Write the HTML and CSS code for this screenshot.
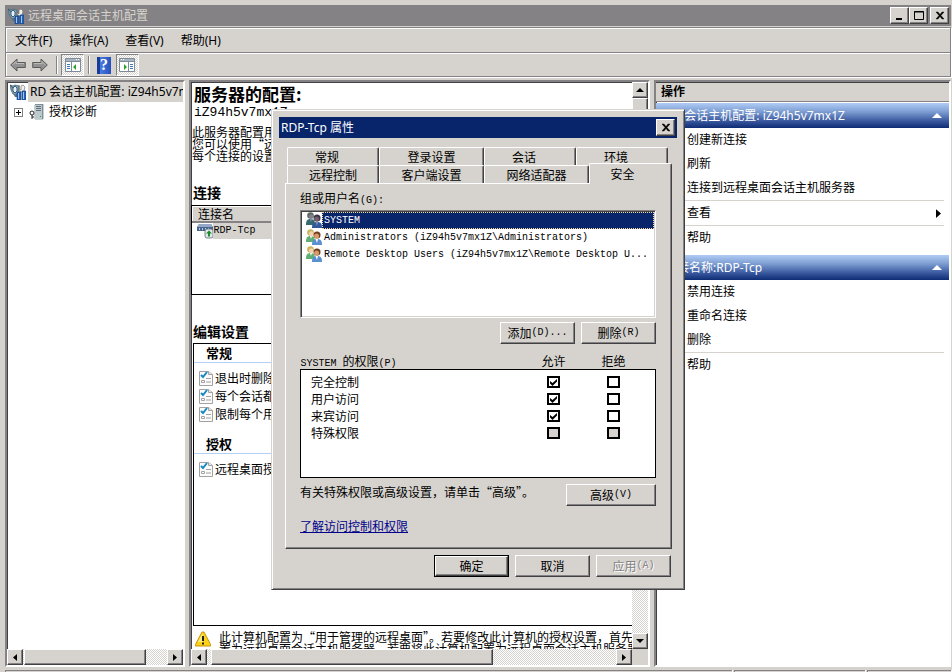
FILE: index.html
```html
<!DOCTYPE html>
<html lang="zh-CN">

<head>
    <meta charset="UTF-8">
    <meta name="viewport" content="width=device-width, initial-scale=1.0">
    <title>远程桌面会话主机配置</title>
    <link rel="stylesheet" href="styles.css">
</head>

<body>
    <!-- shared icons -->
    <svg class="sprite" aria-hidden="true">
        <symbol id="i-tools" viewBox="0 0 16 16">
            <path d="M0 1l3 1 2-1 4 1v6l-3 3-3-1-2-4z" fill="#7f9cb0" stroke="#4a6a80" stroke-width=".8" />
            <path d="M0 1l3 3M3 4l2-2 2 2v3L5 9 3 7z" fill="#e6f3fa" stroke="#3e5f78" />
            <path d="M4 11l3-1 2 3H5z" fill="#566f80" />
            <path d="M9 1v4l2 1V2l2-1 2 2-1 4-3 1-2-2z" fill="#f0f0f0" stroke="#777" stroke-width=".7" />
            <path d="M7 8h4v8H7zM12 7h4v9h-4z" fill="#2460b4" stroke="#17427f" stroke-width=".6" />
            <path d="M8.500 9v6M13.500 8v7" stroke="#9cc6f3" />
        </symbol>
        <symbol id="i-server" viewBox="0 0 16 16">
            <path d="M6 1l1-1h7v15H6z" fill="#8e9ba3" stroke="#69787f" stroke-width=".7" />
            <path d="M6 1h7v14H6z" fill="#bccacf" />
            <path d="M7 2h5v1H7zM7 4h5v1H7zM7 6h5v1H7z" fill="#5f7078" />
            <path d="M11 12h1v1h-1z" fill="#20b020" />
            <circle cx="3" cy="9" r="2" fill="#fff" stroke="#222" />
            <path d="M3 11v4M3 13h2" stroke="#222" />
        </symbol>
        <symbol id="i-rdp" viewBox="0 0 16 16">
            <path d="M2 1h12l2 3v4H0V4z" fill="#49668f" />
            <path d="M2 1h12l2 3H0z" fill="#93a9c6" />
            <path d="M2 6h1M5 6h1M8 6h1M11 6h1" stroke="#dceaff" stroke-width="1.4" />
            <rect x="8" y="6" width="8" height="9" rx="2" fill="#e0e8e8" stroke="#5c6878" stroke-width=".8" />
            <path d="M12 7.500l3 3h-2v3h-2v-3H9z" fill="#1e8a2c" />
        </symbol>
        <symbol id="i-check" viewBox="0 0 14 16">
            <path d="M.5 1.500h9l4 3v11H.5z" fill="#fbfbfb" stroke="#a2a2a2" />
            <path d="M9.500 1.500v3h4" fill="#e5e5e5" stroke="#a2a2a2" />
            <path d="M2.500 10.500h3v2h-3z" fill="#fff" stroke="#a2a2a2" />
            <path d="M7 8.500h5M7 12h5" stroke="#a2a2a2" />
            <path d="M2 5l2 2 4-5" fill="none" stroke="#1688c4" stroke-width="2" />
        </symbol>
        <symbol id="i-users" viewBox="0 0 16 16">
            <circle cx="4.500" cy="3.500" r="3.300" fill="#c8b25a" />
            <circle cx="5.200" cy="4.500" r="2.200" fill="#f6d3b0" />
            <path d="M0 13c0-4 1-6 4.500-6S9 9 9 13z" fill="#5fae74" />
            <path d="M4 7l1 3 1-3z" fill="#fff" />
            <circle cx="11" cy="6" r="3.500" fill="#6b3d1e" />
            <circle cx="10.600" cy="7" r="2.500" fill="#d99a68" />
            <path d="M6 16c0-4 1-6 5-6s5 2 5 6z" fill="#5a8fd0" />
            <path d="M9.500 10l1.500 4 1-4z" fill="#fff" />
        </symbol>
        <symbol id="i-users-sel" viewBox="0 0 16 16">
            <circle cx="4.500" cy="3.500" r="3.300" fill="#5c6a63" />
            <circle cx="5.200" cy="4.500" r="2.200" fill="#7f7f8e" />
            <path d="M0 13c0-4 1-6 4.500-6S9 9 9 13z" fill="#34696f" />
            <path d="M4 7l1 3 1-3z" fill="#8391b5" />
            <circle cx="11" cy="6" r="3.500" fill="#393144" />
            <circle cx="10.600" cy="7" r="2.500" fill="#705f69" />
            <path d="M6 16c0-4 1-6 5-6s5 2 5 6z" fill="#31599d" />
            <path d="M9.500 10l1.500 4 1-4z" fill="#8391b5" />
        </symbol>
        <symbol id="i-arrow" viewBox="0 0 16 14">
            <path d="M.7 7L7 1v3.500h8.300v5H7V13z" fill="#929292" stroke="#5a5a5a" />
            <path d="M2.500 7L6 3.500v2h8" fill="none" stroke="#bbb" />
        </symbol>
        <symbol id="i-pane" viewBox="0 0 16 14">
            <path d="M.5.5h15v13H.5z" fill="#fff" stroke="#7e8b99" />
            <path d="M1 1h14v2H1z" fill="#a8b4c0" />
            <path d="M1 3.500h14M6.500 4v9" stroke="#7e8b99" />
            <path d="M11 1.500h1M13 1.500h1" stroke="#fff" />
            <path d="M2 6.500h3M2 8.500h3M2 10.500h3" stroke="#3a78b8" />
            <path d="M11 6v6L8 9z" fill="#2ca02c" />
        </symbol>
        <symbol id="i-x" viewBox="0 0 10 9">
            <path d="M1 1h2l2 2.500L7 1h2L6 4.500 9 8H7L5 5.500 3 8H1l3-3.500z" fill="#000" stroke="#000" stroke-width=".4" />
        </symbol>
        <symbol id="i-left" viewBox="0 0 4 7">
            <path d="M4 0v7L0 3.500z" />
        </symbol>
        <symbol id="i-up" viewBox="0 0 8 4">
            <path d="M0 4h8L4 0z" />
        </symbol>
    </svg>

    <header class="titlebar">
        <svg class="icon"><use href="#i-tools" /></svg>
        <span class="caption">远程桌面会话主机配置</span>
        <button class="btn cap" aria-label="最小化"><svg width="10" height="9"><path d="M1 7h6v2H1z" /></svg></button>
        <button class="btn cap" aria-label="最大化"><svg width="10" height="9"><path d="M.5.5h9v8h-9zM0 1h10" fill="none" stroke="#000" /></svg></button>
        <button class="btn cap close" aria-label="关闭"><svg width="10" height="9"><use href="#i-x" /></svg></button>
    </header>

    <div class="bars">
        <nav class="menubar">
            <button>文件(F)</button>
            <button>操作(A)</button>
            <button>查看(V)</button>
            <button>帮助(H)</button>
        </nav>
        <div class="toolbar">
            <button class="tool" aria-label="后退"><svg width="16" height="14"><use href="#i-arrow" /></svg></button>
            <button class="tool flip" aria-label="前进"><svg width="16" height="14"><use href="#i-arrow" /></svg></button>
            <span class="sep"></span>
            <button class="tool pressed" aria-label="显示控制台树"><svg width="16" height="14"><use href="#i-pane" /></svg></button>
            <span class="sep"></span>
            <button class="tool help" aria-label="帮助">?</button>
            <button class="tool pressed flip" aria-label="显示操作窗格"><svg width="16" height="14"><use href="#i-pane" /></svg></button>
        </div>
    </div>

    <main class="panes">
        <section class="pane tree">
            <ul class="nodes">
                <li class="node root">
                    <svg class="icon"><use href="#i-tools" /></svg>
                    <span class="node-name selected">RD 会话主机配置: iZ94h5v7mx1Z</span>
                </li>
                <li class="node child">
                    <button class="plus" aria-label="展开"></button>
                    <svg class="icon"><use href="#i-server" /></svg>
                    <span class="node-name">授权诊断</span>
                </li>
            </ul>
            <div class="hscroll">
                <button class="btn arrow" aria-label="向左"><svg width="4" height="7"><use href="#i-left" /></svg></button>
                <div class="track"><div class="btn thumb tree-thumb"></div></div>
                <button class="btn arrow" aria-label="向右"><svg class="flip" width="4" height="7"><use href="#i-left" /></svg></button>
            </div>
        </section>

        <section class="pane result">
            <div class="content">
                <h1>服务器的配置:</h1>
                <div class="server-name">iZ94h5v7mx1Z</div>
                <p class="intro">此服务器配置用于远程桌面会话主机的连接。<br>您可以使用“远程桌面会话主机配置”来修改<br>每个连接的设置，或修改整个服务器的设置。</p>
                <h2>连接</h2>
                <div class="connections">
                    <table>
                        <thead>
                            <tr><th>连接名</th></tr>
                        </thead>
                        <tbody>
                            <tr><td><svg class="icon"><use href="#i-rdp" /></svg><span class="mono selected">RDP-Tcp</span></td></tr>
                        </tbody>
                    </table>
                </div>
                <h2>编辑设置</h2>
                <div class="settings">
                    <h3>常规</h3>
                    <ul>
                        <li><svg class="doc"><use href="#i-check" /></svg>退出时删除临时文件夹</li>
                        <li><svg class="doc"><use href="#i-check" /></svg>每个会话都使用临时文件夹</li>
                        <li><svg class="doc"><use href="#i-check" /></svg>限制每个用户只能进行一个会话</li>
                    </ul>
                    <h3>授权</h3>
                    <ul>
                        <li><svg class="doc"><use href="#i-check" /></svg>远程桌面授权模式</li>
                    </ul>
                </div>
                <div class="notice">
                    <svg class="icon" viewBox="0 0 16 16">
                        <path d="M7 1h2l6.500 12.500V15H.5v-1.500z" fill="#fbd11c" stroke="#c99400" />
                        <path d="M7.500 2.500L3 11h5z" fill="#fdec84" />
                        <path d="M7 5h2v5H7zM7 11.500h2v2H7z" fill="#222" />
                    </svg>
                    <p>此计算机配置为“用于管理的远程桌面”。若要修改此计算机的授权设置，首先<br>置为远程桌面会话主机服务器，若要将此计算机配置为远程桌面会话主机服务器</p>
                </div>
            </div>
            <div class="vscroll">
                <button class="btn arrow" aria-label="向上"><svg width="8" height="4"><use href="#i-up" /></svg></button>
                <div class="track"><div class="btn thumb result-vthumb"></div></div>
                <button class="btn arrow" aria-label="向下"><svg class="down" width="8" height="4"><use href="#i-up" /></svg></button>
            </div>
            <div class="hscroll">
                <button class="btn arrow" aria-label="向左"><svg width="4" height="7"><use href="#i-left" /></svg></button>
                <div class="track"><div class="btn thumb result-thumb"></div></div>
                <button class="btn arrow" aria-label="向右"><svg class="flip" width="4" height="7"><use href="#i-left" /></svg></button>
            </div>
        </section>

        <aside class="pane actions">
            <h2 class="actions-title">操作</h2>
            <div class="group">
                <h3 class="group-title">RD 会话主机配置: iZ94h5v7mx1Z<svg width="10" height="5" viewBox="0 0 8 4"><use href="#i-up" /></svg></h3>
                <button>创建新连接</button>
                <button>刷新</button>
                <button>连接到远程桌面会话主机服务器</button>
                <hr>
                <button>查看<svg class="flip" width="5" height="9"><use href="#i-left" /></svg></button>
                <hr>
                <button>帮助</button>
            </div>
            <div class="group">
                <h3 class="group-title">连接名称:RDP-Tcp<svg width="10" height="5" viewBox="0 0 8 4"><use href="#i-up" /></svg></h3>
                <button>禁用连接</button>
                <button>重命名连接</button>
                <button>删除</button>
                <hr>
                <button>帮助</button>
            </div>
        </aside>
    </main>

    <footer class="statusbar">
        <span></span>
        <span></span>
        <span></span>
    </footer>

    <div class="dialog" role="dialog" aria-labelledby="dialog-title">
        <div class="dialog-title">
            <span id="dialog-title">RDP-Tcp 属性</span>
            <button class="btn cap" aria-label="关闭"><svg width="10" height="9"><use href="#i-x" /></svg></button>
        </div>
        <div class="dialog-body">
            <div class="tabs" role="tablist">
                <div class="tab-row back">
                    <button class="tab w1" role="tab">常规</button>
                    <button class="tab w2" role="tab">登录设置</button>
                    <button class="tab w1" role="tab">会话</button>
                    <button class="tab w1" role="tab">环境</button>
                </div>
                <div class="tab-row">
                    <button class="tab w1" role="tab">远程控制</button>
                    <button class="tab w2" role="tab">客户端设置</button>
                    <button class="tab w2" role="tab">网络适配器</button>
                    <button class="tab active" role="tab" aria-selected="true">安全</button>
                </div>
            </div>
            <div class="sheet" role="tabpanel">
                <div class="field-label" id="users-label">组或用户名<span class="mono">(G):</span></div>
                <ul class="users" role="listbox" aria-labelledby="users-label">
                    <li role="option" aria-selected="true"><svg class="icon"><use href="#i-users-sel" /></svg><span class="mono user on">SYSTEM</span></li>
                    <li role="option"><svg class="icon"><use href="#i-users" /></svg><span class="mono user">Administrators (iZ94h5v7mx1Z\Administrators)</span></li>
                    <li role="option"><svg class="icon"><use href="#i-users" /></svg><span class="mono user">Remote Desktop Users (iZ94h5v7mx1Z\Remote Desktop U...</span></li>
                </ul>
                <div class="row-end">
                    <button class="btn push">添加<span class="mono">(D)...</span></button>
                    <button class="btn push">删除<span class="mono">(R)</span></button>
                </div>
                <table class="perms">
                    <thead>
                        <tr>
                            <th><span class="mono">SYSTEM </span>的权限<span class="mono">(P)</span></th>
                            <th class="tick">允许</th>
                            <th class="tick deny">拒绝</th>
                        </tr>
                    </thead>
                    <tbody>
                        <tr>
                            <td>完全控制</td>
                            <td class="tick"><input type="checkbox" aria-label="允许完全控制" checked></td>
                            <td class="tick deny"><input type="checkbox" aria-label="拒绝完全控制"></td>
                        </tr>
                        <tr>
                            <td>用户访问</td>
                            <td class="tick"><input type="checkbox" aria-label="允许用户访问" checked></td>
                            <td class="tick deny"><input type="checkbox" aria-label="拒绝用户访问"></td>
                        </tr>
                        <tr>
                            <td>来宾访问</td>
                            <td class="tick"><input type="checkbox" aria-label="允许来宾访问" checked></td>
                            <td class="tick deny"><input type="checkbox" aria-label="拒绝来宾访问"></td>
                        </tr>
                        <tr>
                            <td>特殊权限</td>
                            <td class="tick"><input type="checkbox" aria-label="允许特殊权限" disabled></td>
                            <td class="tick deny"><input type="checkbox" aria-label="拒绝特殊权限" disabled></td>
                        </tr>
                    </tbody>
                </table>
                <div class="advanced">
                    <span>有关特殊权限或高级设置，请单击“高级”。</span>
                    <button class="btn push wide">高级<span class="mono">(V)</span></button>
                </div>
                <a class="learn" href="#">了解访问控制和权限</a>
            </div>
            <div class="dialog-buttons">
                <button class="btn push default">确定</button>
                <button class="btn push">取消</button>
                <button class="btn push" disabled>应用<span class="mono">(A)</span></button>
            </div>
        </div>
    </div>
</body>

</html>
```
FILE: styles.css
```css
:root {
    --face: #d6d3ce;
    --shadow: #848284;
    --dark: #424142;
    --navy: #08246b;
    --song: "Noto Sans CJK SC", sans-serif;
    --ui: "Noto Sans", "Noto Sans CJK SC", sans-serif;
}

* {
    box-sizing: border-box;
}

body {
    margin: 0;
    padding: 5px 1px 0 5px;
    height: 100vh;
    display: flex;
    flex-direction: column;
    overflow: hidden;
    position: relative;
    background-color: var(--face);
    color: black;
    font-family: var(--ui);
    font-size: 12px;
    line-height: 16px;
}

h1,
h2,
h3,
p,
ul {
    margin: 0;
    padding: 0;
}

ul {
    list-style: none;
}

button {
    font: inherit;
    color: inherit;
    padding: 0;
    margin: 0;
    border: none;
    background: none;
    white-space: nowrap;
}

svg {
    display: block;
    flex: none;
}

.sprite {
    position: absolute;
    width: 0;
    height: 0;
}

.icon {
    width: 16px;
    height: 16px;
}

.flip {
    transform: scaleX(-1);
}

.down {
    transform: scaleY(-1);
}

.mono {
    font-family: "Liberation Mono", monospace;
    font-size: 10px;
}

.selected {
    background-color: var(--face);
}

/* raised 3D button */
.btn {
    display: flex;
    align-items: center;
    justify-content: center;
    background-color: var(--face);
    border: 1px solid;
    border-color: white var(--dark) var(--dark) white;
    box-shadow: inset -1px -1px var(--shadow);
}

.cap {
    width: 19px;
    height: 17px;
}

/*----------- title bar */
.titlebar {
    display: flex;
    align-items: center;
    height: 21px;
    flex: none;
    padding: 0 2px 0 3px;
    background-color: var(--shadow);
    color: var(--face);
}

.caption {
    flex: 1;
    padding-left: 4px;
}

.close {
    margin-left: 2px;
}

/*----------- menu and toolbar */
.bars {
    flex: none;
    margin-top: 1px;
    border: 1px solid var(--shadow);
    box-shadow: inset 1px 1px white, 1px 1px white;
}

.menubar {
    display: flex;
    gap: 17px;
    height: 25px;
    padding: 2px 0 0 9px;
    border-bottom: 1px solid var(--shadow);
}

.toolbar {
    display: flex;
    align-items: center;
    height: 23px;
    border-top: 1px solid white;
}

.tool {
    display: flex;
    align-items: center;
    justify-content: center;
    width: 23px;
    height: 22px;
}

.tool.pressed,
.track {
    background: repeating-conic-gradient(white 0 25%, var(--face) 0 50%) 0 0 / 2px 2px;
}

.tool.pressed {
    border: 1px solid;
    border-color: var(--shadow) white white var(--shadow);
}

.tool.pressed.flip {
    border-color: var(--shadow) var(--shadow) white white;
}

.tool.help {
    width: 14px;
    height: 17px;
    margin: 0 5px 0 4px;
    background: linear-gradient(90deg, #183c9c 3px, #4a7ae0 3px, #2450bc);
    color: white;
    font-family: "Liberation Serif", serif;
    font-size: 16px;
    font-weight: bold;
}

.sep {
    width: 2px;
    height: 18px;
    margin: 0 3px 0 4px;
    border-left: 1px solid var(--shadow);
    border-right: 1px solid white;
}

/*----------- three panes */
.panes {
    flex: 1;
    min-height: 0;
    margin-top: 3px;
    display: grid;
    grid-template-columns: 180px minmax(0, 1fr) 297px;
    grid-template-rows: minmax(0, 1fr);
    gap: 4px;
}

.pane {
    background-color: white;
    border: 2px solid;
    border-color: var(--shadow) white white var(--shadow);
    box-shadow: inset 1px 1px var(--dark);
    overflow: hidden;
    min-width: 0;
}

.tree {
    display: flex;
    flex-direction: column;
}

.nodes {
    flex: 1;
    padding-left: 3px;
}

.node {
    display: flex;
    align-items: center;
    height: 20px;
}

.node-name {
    padding: 0 2px;
    margin-left: 2px;
    line-height: 20px;
    white-space: nowrap;
}

.child {
    padding-left: 4px;
}

.child .icon {
    margin-left: 6px;
}

.plus {
    width: 9px;
    height: 9px;
    border: 1px solid var(--shadow);
    background: linear-gradient(black, black) center / 5px 1px no-repeat,
        linear-gradient(black, black) center / 1px 5px no-repeat;
}

/*----------- scrollbars */
.hscroll {
    display: flex;
    height: 16px;
}

.vscroll {
    display: flex;
    flex-direction: column;
    width: 16px;
}

.track {
    flex: 1;
}

.arrow {
    flex: none;
    width: 16px;
    height: 16px;
}

.hscroll .thumb {
    height: 16px;
}

.tree-thumb {
    width: 85%;
    margin-left: 1px;
}

.result-thumb {
    width: 69%;
    margin-left: 4px;
}

.result-vthumb {
    height: 85%;
}

/*----------- middle pane */
.result {
    display: grid;
    grid-template-columns: minmax(0, 1fr) 16px;
    grid-template-rows: minmax(0, 1fr) 16px;
    background: linear-gradient(0deg, var(--face) 16px, white 16px);
    font-family: var(--song);
}

.content {
    overflow: hidden;
    white-space: nowrap;
}

.content h1 {
    padding: 2px 0 0 3px;
    font-size: 17px;
    line-height: 20px;
}

.server-name {
    padding-left: 3px;
    font-family: "Liberation Mono", monospace;
    font-size: 13px;
    line-height: 18px;
}

.intro {
    padding: 4px 0 0 1px;
    line-height: 12px;
}

.content h2 {
    padding-left: 2px;
    font-size: 14px;
    line-height: 18px;
}

.intro + h2 {
    margin-top: 21px;
}

.connections {
    height: 90px;
    margin: 4px 0 27px;
    border: 1px solid black;
}

.connections table {
    width: 100%;
    border-collapse: collapse;
}

.connections th {
    height: 15px;
    padding: 0 0 0 5px;
    background-color: var(--face);
    border: solid;
    border-width: 1px 0 2px 1px;
    border-color: white var(--shadow) var(--shadow) white;
    font-weight: normal;
    line-height: 12px;
    text-align: left;
}

.connections td {
    display: flex;
    padding: 0 0 0 4px;
}

.connections td .selected {
    flex: 1;
    padding-left: 1px;
}

.settings {
    height: 283px;
    margin: 3px 0 0 2px;
    border: 1px solid black;
    border-right: none;
}

.settings h3 {
    padding-left: 12px;
    margin-bottom: 6px;
    font-size: 13px;
    line-height: 18px;
    border-bottom: 1px solid #b5cff7;
}

.settings ul + h3 {
    margin-top: 12px;
}

.settings li {
    display: flex;
    align-items: center;
    gap: 2px;
    height: 18px;
    padding-left: 5px;
}

.doc {
    width: 14px;
    height: 16px;
}

.notice {
    display: flex;
    gap: 8px;
    padding: 5px 0 0 4px;
}

.notice p {
    line-height: 12px;
}

/*----------- actions */
.actions-title {
    height: 20px;
    padding-left: 5px;
    margin-bottom: 1px;
    background-color: var(--face);
    border-top: 1px solid var(--dark);
    border-bottom: 1px solid var(--shadow);
    font-size: 12px;
    line-height: 18px;
}

.group {
    margin-bottom: 5px;
}

.group-title {
    display: flex;
    align-items: center;
    justify-content: space-between;
    height: 25px;
    padding: 0 7px 0 9px;
    background: linear-gradient(#b0ccf5, #7d9dd2 35%, #34539a 75%, #0d2c74);
    color: white;
    fill: white;
    font-size: 12px;
    font-weight: normal;
}

.group button {
    display: flex;
    align-items: center;
    justify-content: space-between;
    width: 100%;
    height: 24px;
    padding: 0 8px 0 31px;
}

.group hr {
    height: 1px;
    margin: 0 5px;
    border: none;
    background-color: var(--face);
}

/*----------- status bar */
.statusbar {
    flex: none;
    display: grid;
    grid-template-columns: 1fr 131px 84px;
    gap: 2px;
    height: 2px;
    margin-top: 3px;
}

.statusbar span {
    border: solid var(--shadow);
    border-width: 1px 0 0 1px;
    box-shadow: 1px 0 white;
}

/*----------- properties dialog */
.dialog {
    position: absolute;
    left: 271px;
    top: 109px;
    width: 414px;
    padding: 7px;
    background-color: var(--face);
    border: 1px solid;
    border-color: var(--face) var(--dark) var(--dark) var(--face);
    box-shadow: inset 1px 1px white, inset -1px -1px var(--shadow);
    font-family: var(--song);
}

.dialog .mono {
    line-height: 10px;
}

.dialog-title {
    display: flex;
    align-items: center;
    justify-content: space-between;
    height: 21px;
    padding: 0 2px;
    background-color: var(--navy);
    color: white;
    font-family: var(--ui);
}

.dialog-body {
    padding: 9px 5px 5px 6px;
}

.tabs {
    padding-left: 2px;
}

.tab-row {
    display: flex;
    height: 18px;
}

.tab {
    height: 18px;
    border: 1px solid;
    border-color: white var(--dark) transparent white;
    border-bottom: none;
    border-radius: 2px 2px 0 0;
    box-shadow: inset -1px 0 var(--shadow);
    line-height: 16px;
}

.back .tab {
    padding-right: 12px;
}

.back .tab.w2 {
    padding-right: 0;
}

.tab.w1 {
    width: 92px;
}

.tab.w2 {
    width: 105px;
}

.tab.active {
    position: relative;
    flex: 1;
    height: 21px;
    margin-top: -2px;
    padding-right: 16px;
    background-color: var(--face);
}

.sheet {
    height: 366px;
    padding: 6px 15px 0 14px;
    border: 1px solid;
    border-color: white var(--dark) var(--dark) white;
    box-shadow: inset -1px -1px var(--shadow);
}

.field-label {
    height: 16px;
}

.users {
    height: 108px;
    margin-top: 4px;
    background-color: white;
    border: 1px solid;
    border-color: var(--shadow) white white var(--shadow);
    box-shadow: inset 1px 1px var(--dark), inset -1px -1px var(--face);
    padding: 1px 1px 0 5px;
}

.users li {
    display: flex;
    height: 17px;
}

.dialog .user {
    flex: 1;
    padding-left: 1px;
    border: 1px solid transparent;
    line-height: 15px;
    white-space: nowrap;
}

.dialog .user.on {
    background-color: var(--navy);
    border: 1px dotted #f7db94;
    color: white;
}

.row-end {
    display: flex;
    justify-content: flex-end;
    gap: 6px;
    margin-top: 4px;
}

.push {
    width: 75px;
    height: 22px;
}

.push.wide {
    width: 90px;
}

.push.default {
    outline: 1px solid black;
    outline-offset: -1px;
    border-width: 2px;
}

.push:disabled {
    color: var(--shadow);
    text-shadow: 1px 1px white;
}

.perms {
    width: 100%;
    margin-top: 9px;
    border-collapse: collapse;
    table-layout: fixed;
}

.perms th {
    height: 16px;
    padding: 0;
    font-weight: normal;
    text-align: left;
    white-space: pre;
}

.perms tbody {
    background-color: white;
    border: 1px solid black;
}

.perms td {
    height: 17px;
    padding: 0 0 0 10px;
    line-height: 17px;
    vertical-align: top;
}

.perms tr:first-child td {
    height: 20px;
    padding-top: 3px;
}

.perms tr:last-child td {
    height: 53px;
}

.perms .tick {
    width: 60px;
    padding-left: 0;
    text-align: center;
}

.perms .deny {
    width: 72px;
    padding-right: 12px;
}

.perms input {
    appearance: none;
    display: block;
    width: 13px;
    height: 12px;
    margin: 3px auto 0;
    border: 2px solid black;
    background-color: white;
}

.perms input:checked::before {
    content: "";
    display: block;
    width: 7px;
    height: 7px;
    margin: 1px;
    background-color: black;
    clip-path: polygon(0 29%, 36% 57%, 100% 0, 100% 36%, 36% 100%, 0 64%);
}

.perms input:disabled {
    background-color: var(--face);
}

.advanced {
    display: flex;
    justify-content: space-between;
    margin: 6px 0 12px;
}

.learn {
    color: #00008b;
}

.dialog-buttons {
    display: flex;
    justify-content: flex-end;
    gap: 6px;
    padding: 6px 1px 0 0;
}
```
